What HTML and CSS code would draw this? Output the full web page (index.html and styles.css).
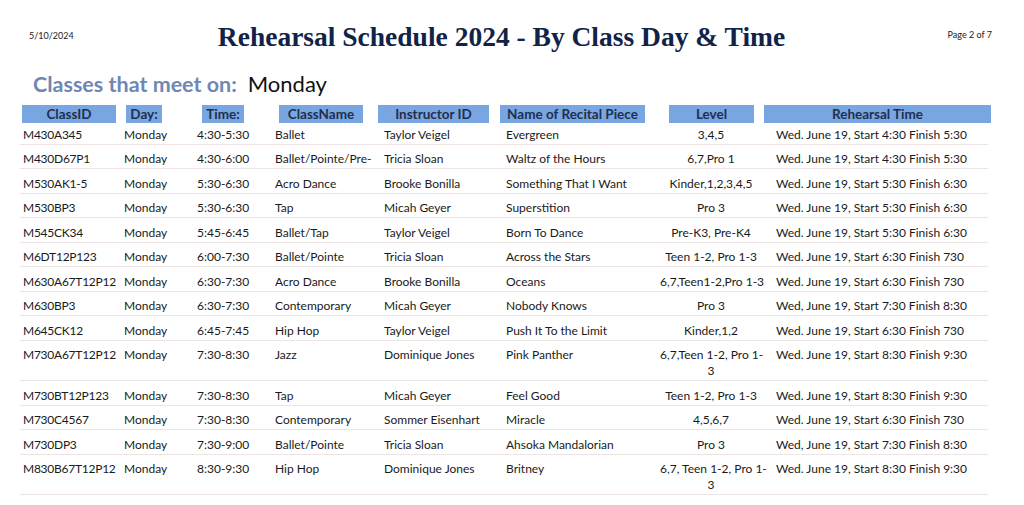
FILE: index.html
```html
<!DOCTYPE html>
<html>
<head>
<meta charset="utf-8">
<link rel="stylesheet" href="styles.css">
</head>
<body>
<div class="page">
  <header class="top">
    <div class="date">5/10/2024</div>
    <h1 class="title">Rehearsal Schedule 2024 - By Class Day &amp; Time</h1>
    <div class="pageno">Page 2 of 7</div>
  </header>
  <div class="group">
    <span class="group-label">Classes that meet on:</span>
    <span class="group-value">Monday</span>
  </div>
  <div class="sched">
    <div class="row head">
      <div class="c c1"><span class="hb hb1">ClassID</span></div>
      <div class="c c2"><span class="hb hb2">Day:</span></div>
      <div class="c c3"><span class="hb hb3">Time:</span></div>
      <div class="c c4"><span class="hb hb4">ClassName</span></div>
      <div class="c c5"><span class="hb hb5">Instructor ID</span></div>
      <div class="c c6"><span class="hb hb6">Name of Recital Piece</span></div>
      <div class="c c7"><span class="hb hb7">Level</span></div>
      <div class="c c8"><span class="hb hb8">Rehearsal Time</span></div>
    </div>
    <div class="row"><div class="c c1">M430A345</div><div class="c c2">Monday</div><div class="c c3">4:30-5:30</div><div class="c c4">Ballet</div><div class="c c5">Taylor Veigel</div><div class="c c6">Evergreen</div><div class="c c7">3,4,5</div><div class="c c8">Wed. June 19, Start 4:30 Finish 5:30</div></div>
    <div class="row"><div class="c c1">M430D67P1</div><div class="c c2">Monday</div><div class="c c3">4:30-6:00</div><div class="c c4">Ballet/Pointe/Pre-</div><div class="c c5">Tricia Sloan</div><div class="c c6">Waltz of the Hours</div><div class="c c7">6,7,Pro 1</div><div class="c c8">Wed. June 19, Start 4:30 Finish 5:30</div></div>
    <div class="row"><div class="c c1">M530AK1-5</div><div class="c c2">Monday</div><div class="c c3">5:30-6:30</div><div class="c c4">Acro Dance</div><div class="c c5">Brooke Bonilla</div><div class="c c6">Something That I Want</div><div class="c c7">Kinder,1,2,3,4,5</div><div class="c c8">Wed. June 19, Start 5:30 Finish 6:30</div></div>
    <div class="row"><div class="c c1">M530BP3</div><div class="c c2">Monday</div><div class="c c3">5:30-6:30</div><div class="c c4">Tap</div><div class="c c5">Micah Geyer</div><div class="c c6">Superstition</div><div class="c c7">Pro 3</div><div class="c c8">Wed. June 19, Start 5:30 Finish 6:30</div></div>
    <div class="row"><div class="c c1">M545CK34</div><div class="c c2">Monday</div><div class="c c3">5:45-6:45</div><div class="c c4">Ballet/Tap</div><div class="c c5">Taylor Veigel</div><div class="c c6">Born To Dance</div><div class="c c7">Pre-K3, Pre-K4</div><div class="c c8">Wed. June 19, Start 5:30 Finish 6:30</div></div>
    <div class="row"><div class="c c1">M6DT12P123</div><div class="c c2">Monday</div><div class="c c3">6:00-7:30</div><div class="c c4">Ballet/Pointe</div><div class="c c5">Tricia Sloan</div><div class="c c6">Across the Stars</div><div class="c c7">Teen 1-2, Pro 1-3</div><div class="c c8">Wed. June 19, Start 6:30 Finish 730</div></div>
    <div class="row"><div class="c c1">M630A67T12P12</div><div class="c c2">Monday</div><div class="c c3">6:30-7:30</div><div class="c c4">Acro Dance</div><div class="c c5">Brooke Bonilla</div><div class="c c6">Oceans</div><div class="c c7">6,7,Teen1-2,Pro 1-3</div><div class="c c8">Wed. June 19, Start 6:30 Finish 730</div></div>
    <div class="row"><div class="c c1">M630BP3</div><div class="c c2">Monday</div><div class="c c3">6:30-7:30</div><div class="c c4">Contemporary</div><div class="c c5">Micah Geyer</div><div class="c c6">Nobody Knows</div><div class="c c7">Pro 3</div><div class="c c8">Wed, June 19, Start 7:30 Finish 8:30</div></div>
    <div class="row"><div class="c c1">M645CK12</div><div class="c c2">Monday</div><div class="c c3">6:45-7:45</div><div class="c c4">Hip Hop</div><div class="c c5">Taylor Veigel</div><div class="c c6">Push It To the Limit</div><div class="c c7">Kinder,1,2</div><div class="c c8">Wed. June 19, Start 6:30 Finish 730</div></div>
    <div class="row"><div class="c c1">M730A67T12P12</div><div class="c c2">Monday</div><div class="c c3">7:30-8:30</div><div class="c c4">Jazz</div><div class="c c5">Dominique Jones</div><div class="c c6">Pink Panther</div><div class="c c7">6,7,Teen 1-2, Pro 1-<br>3</div><div class="c c8">Wed. June 19, Start 8:30 Finish 9:30</div></div>
    <div class="row"><div class="c c1">M730BT12P123</div><div class="c c2">Monday</div><div class="c c3">7:30-8:30</div><div class="c c4">Tap</div><div class="c c5">Micah Geyer</div><div class="c c6">Feel Good</div><div class="c c7">Teen 1-2, Pro 1-3</div><div class="c c8">Wed. June 19, Start 8:30 Finish 9:30</div></div>
    <div class="row"><div class="c c1">M730C4567</div><div class="c c2">Monday</div><div class="c c3">7:30-8:30</div><div class="c c4">Contemporary</div><div class="c c5">Sommer Eisenhart</div><div class="c c6">Miracle</div><div class="c c7">4,5,6,7</div><div class="c c8">Wed. June 19, Start 6:30 Finish 730</div></div>
    <div class="row"><div class="c c1">M730DP3</div><div class="c c2">Monday</div><div class="c c3">7:30-9:00</div><div class="c c4">Ballet/Pointe</div><div class="c c5">Tricia Sloan</div><div class="c c6">Ahsoka Mandalorian</div><div class="c c7">Pro 3</div><div class="c c8">Wed, June 19, Start 7:30 Finish 8:30</div></div>
    <div class="row"><div class="c c1">M830B67T12P12</div><div class="c c2">Monday</div><div class="c c3">8:30-9:30</div><div class="c c4">Hip Hop</div><div class="c c5">Dominique Jones</div><div class="c c6">Britney</div><div class="c c7">6,7, Teen 1-2, Pro 1-<br>3</div><div class="c c8">Wed. June 19, Start 8:30 Finish 9:30</div></div>
  </div>
</div>
</body>
</html>
```
FILE: styles.css
```css
html, body {
  margin: 0;
  padding: 0;
  background: #ffffff;
}
body {
  font-family: Lato, "Open Sans", sans-serif;
  color: #1a1a1a;
  width: 1024px;
  height: 505px;
  overflow: hidden;
}
.page {
  padding: 22px 0 0 20px;
}
.top {
  display: grid;
  width: 963px;
  height: 30px;
  align-items: center;
}
.top > * {
  grid-area: 1 / 1;
}
.date {
  justify-self: start;
  margin-left: 9px;
  font-size: 9px;
  margin-top: -4px;
}
.pageno {
  justify-self: end;
  margin-right: -9px;
  font-size: 9px;
  margin-top: -6px;
}
.title {
  justify-self: center;
  margin: 0;
  font-family: "Liberation Serif", serif;
  font-weight: bold;
  font-size: 27.5px;
  line-height: 30px;
  color: #102348;
}
.group {
  margin: 18px 0 0 13px;
  height: 27px;
  display: flex;
  align-items: baseline;
  gap: 11px;
}
.group-label {
  font-weight: bold;
  font-size: 21.5px;
  color: #6e87b5;
}
.group-value {
  font-size: 22px;
  color: #111111;
}
.sched {
  margin-top: 8px;
  width: 968px;
}
.row {
  display: grid;
  grid-template-columns: 102px 73px 78px 103px 122px 162px 102px 226px;
  font-size: 12px;
  line-height: 16px;
  padding: 6.5px 0 1px;
  border-bottom: 1px solid #efe4e4;
}
.row.head {
  padding: 0;
  border-bottom: none;
  height: 18px;
  margin-bottom: -3px;
}
.c {
  white-space: nowrap;
  overflow: hidden;
}
.c1 { padding-left: 3px; letter-spacing: -0.25px; }
.c2 { padding-left: 2px; }
.c3 { padding-left: 2px; }
.c4 { padding-left: 2px; }
.c5 { padding-left: 8px; }
.c6 { padding-left: 8px; }
.c7 { text-align: center; overflow: visible; }
.c8 { padding-left: 14px; overflow: visible; }
.head .c {
  padding: 0;
  overflow: visible;
  text-align: left;
  letter-spacing: 0;
}
.hb {
  display: block;
  height: 18px;
  line-height: 18px;
  background: #79a5e1;
  color: #1f2f4e;
  font-weight: bold;
  font-size: 13.5px;
  text-align: center;
  white-space: nowrap;
}
.hb1 { margin-left: 2px; width: 94px; }
.hb2 { margin-left: 4px; width: 36px; }
.hb3 { margin-left: 7px; width: 42px; }
.hb4 { margin-left: 6px; width: 84px; }
.hb5 { margin-left: 2px; width: 111px; }
.hb6 { margin-left: 2px; width: 145px; }
.hb7 { margin-left: 9px; width: 85px; }
.hb8 { margin-left: 2px; width: 227px; }
```
